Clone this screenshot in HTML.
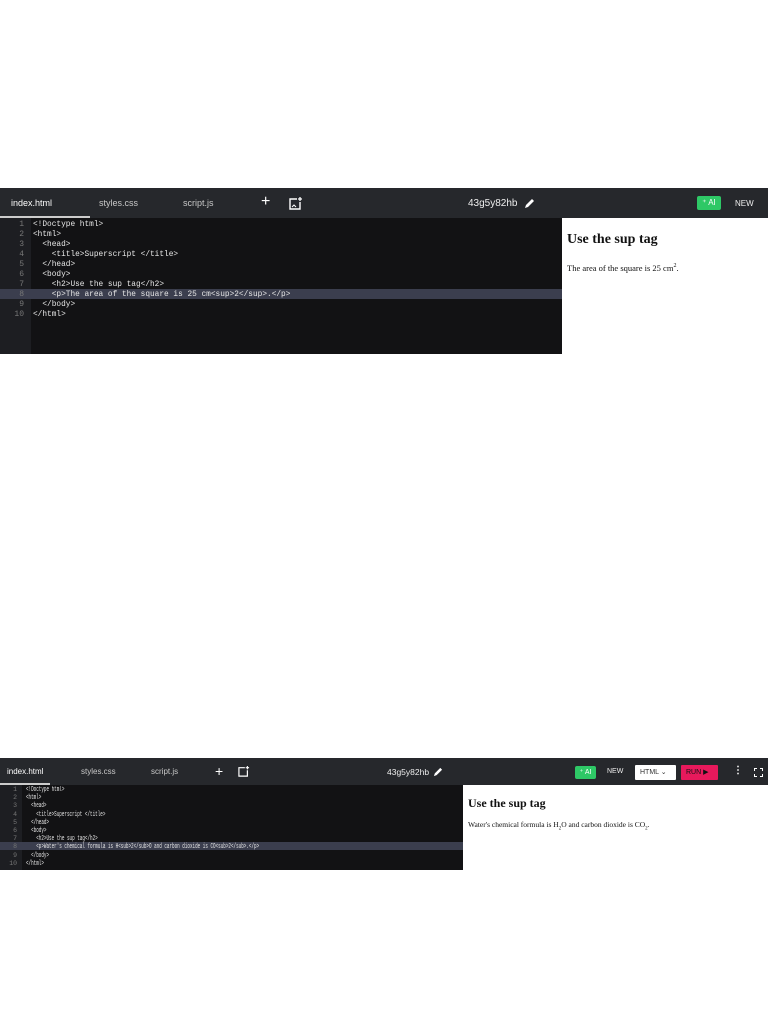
<!DOCTYPE html>
<html><head><meta charset="utf-8"><style>
*{margin:0;padding:0;box-sizing:border-box}
body{width:768px;height:1024px;background:#fff;position:relative;overflow:hidden;font-family:"Liberation Sans",sans-serif}
.bar{position:absolute;left:0;width:768px;background:#26282c;color:#ddd}
.t{position:absolute;color:#c8c8c8}
.ed{position:absolute;left:0;background:#121214;overflow:hidden}
.gut{position:absolute;left:0;top:0;bottom:0;background:#1d1e22}
.code{position:absolute;font-family:"Liberation Mono",monospace;color:#e6e6e6;white-space:pre;transform-origin:0 0}
.ln{position:absolute;font-family:"Liberation Mono",monospace;color:#777;text-align:right;white-space:pre}
.pv{position:absolute;background:#fff;font-family:"Liberation Serif",serif;color:#111}
</style></head><body>

<!-- TOP -->
<div class="bar" style="top:188px;height:30px">
  <div class="t" style="left:11px;top:10px;font-size:9px;color:#fff">index.html</div>
  <div style="position:absolute;left:0;top:28px;width:90px;height:2px;background:#ccc"></div>
  <div class="t" style="left:99px;top:10px;font-size:9px">styles.css</div>
  <div class="t" style="left:183px;top:10px;font-size:9px">script.js</div>
  <div class="t" style="left:261px;top:5px;font-size:16px;color:#fff">+</div>
  <svg style="position:absolute;left:289px;top:9px" width="14" height="13" viewBox="0 0 14 13"><path d="M8 2H1v10h10V5" stroke="#fff" fill="none" stroke-width="1.4"/><path d="M11 0v4M9 2h4" stroke="#fff" stroke-width="1.3"/><path d="M3 10l2-2 2 2" stroke="#fff" fill="none"/></svg>
  <div class="t" style="left:468px;top:10px;font-size:10px;color:#eee">43g5y82hb</div>
  <svg style="position:absolute;left:524px;top:10px" width="11" height="11" viewBox="0 0 11 11"><path d="M1 10l1-3 6-6 2 2-6 6z" fill="#fff"/></svg>
  <div style="position:absolute;left:697px;top:8px;width:24px;height:14px;background:#2ec866;border-radius:2px;color:#fff;font-size:8px;line-height:14px;text-align:center">⁺ AI</div>
  <div class="t" style="left:735px;top:11px;font-size:8px;color:#eee">NEW</div>
</div>
<div class="ed" style="top:218px;width:562px;height:136px">
  <div class="gut" style="width:31px"></div>
  <div style="position:absolute;left:0;top:71px;width:562px;height:10px;background:#3b3e4e"></div>
  <div class="ln" style="left:2px;top:2px;width:22px;font-size:8px;line-height:10px">1
2
3
4
5
6
7
8
9
10</div>
  <div class="code" style="left:33px;top:2px;font-size:8.3px;line-height:10px;transform:scaleX(0.94)">&lt;!Doctype html&gt;
&lt;html&gt;
  &lt;head&gt;
    &lt;title&gt;Superscript &lt;/title&gt;
  &lt;/head&gt;
  &lt;body&gt;
    &lt;h2&gt;Use the sup tag&lt;/h2&gt;
    &lt;p&gt;The area of the square is 25 cm&lt;sup&gt;2&lt;/sup&gt;.&lt;/p&gt;
  &lt;/body&gt;
&lt;/html&gt;</div>
</div>
<div class="pv" style="left:562px;top:218px;width:206px;height:136px">
  <div style="position:absolute;left:5px;top:14px;font-size:14px;font-weight:bold">Use the sup tag</div>
  <div style="position:absolute;left:5px;top:45px;font-size:8.5px">The area of the square is 25 cm<sup style="font-size:6px">2</sup>.</div>
</div>

<!-- BOTTOM -->
<div class="bar" style="top:758px;height:27px">
  <div class="t" style="left:7px;top:9px;font-size:8px;color:#fff">index.html</div>
  <div style="position:absolute;left:0;top:25px;width:50px;height:2px;background:#ccc"></div>
  <div class="t" style="left:81px;top:9px;font-size:8px">styles.css</div>
  <div class="t" style="left:151px;top:9px;font-size:8px">script.js</div>
  <div class="t" style="left:215px;top:5px;font-size:14px;color:#fff">+</div>
  <svg style="position:absolute;left:238px;top:8px" width="12" height="11" viewBox="0 0 14 13"><path d="M8 2H1v10h10V5" stroke="#fff" fill="none" stroke-width="1.4"/><path d="M11 0v4M9 2h4" stroke="#fff" stroke-width="1.3"/></svg>
  <div class="t" style="left:387px;top:9px;font-size:8.5px;color:#eee">43g5y82hb</div>
  <svg style="position:absolute;left:433px;top:9px" width="10" height="10" viewBox="0 0 11 11"><path d="M1 10l1-3 6-6 2 2-6 6z" fill="#fff"/></svg>
  <div style="position:absolute;left:575px;top:8px;width:21px;height:13px;background:#2ec866;border-radius:2px;color:#fff;font-size:7px;line-height:13px;text-align:center">⁺ AI</div>
  <div class="t" style="left:607px;top:10px;font-size:7px;color:#eee">NEW</div>
  <div style="position:absolute;left:635px;top:7px;width:41px;height:15px;background:#fff;border-radius:1px;color:#333;font-size:7px;line-height:15px;padding-left:5px">HTML ⌄</div>
  <div style="position:absolute;left:681px;top:7px;width:37px;height:15px;background:#e8195c;border-radius:1px;color:#111;font-size:7px;line-height:15px;padding-left:5px">RUN ▶</div>
  <div class="t" style="left:733px;top:7px;font-size:10px;color:#fff;font-weight:bold">⋮</div>
  <div style="position:absolute;left:754px;top:10px;width:9px;height:9px;border:1.5px dashed #fff"></div>
</div>
<div class="ed" style="top:785px;width:463px;height:85px">
  <div class="gut" style="width:22px"></div>
  <div style="position:absolute;left:0;top:57px;width:463px;height:8px;background:#3b3e4e"></div>
  <div class="ln" style="left:0;top:1px;width:17px;font-size:6.5px;line-height:8.2px">1
2
3
4
5
6
7
8
9
10</div>
  <div class="code" style="left:26px;top:1px;font-size:7px;line-height:8.2px;transform:scaleX(0.61)">&lt;!Doctype html&gt;
&lt;html&gt;
  &lt;head&gt;
    &lt;title&gt;Superscript &lt;/title&gt;
  &lt;/head&gt;
  &lt;body&gt;
    &lt;h2&gt;Use the sup tag&lt;/h2&gt;
    &lt;p&gt;Water's chemical formula is H&lt;sub&gt;2&lt;/sub&gt;O and carbon dioxide is CO&lt;sub&gt;2&lt;/sub&gt;.&lt;/p&gt;
  &lt;/body&gt;
&lt;/html&gt;</div>
</div>
<div class="pv" style="left:463px;top:785px;width:305px;height:85px">
  <div style="position:absolute;left:5px;top:11px;font-size:12px;font-weight:bold">Use the sup tag</div>
  <div style="position:absolute;left:5px;top:35px;font-size:7.5px">Water's chemical formula is H<sub style="font-size:5px">2</sub>O and carbon dioxide is CO<sub style="font-size:5px">2</sub>.</div>
</div>
</body></html>
